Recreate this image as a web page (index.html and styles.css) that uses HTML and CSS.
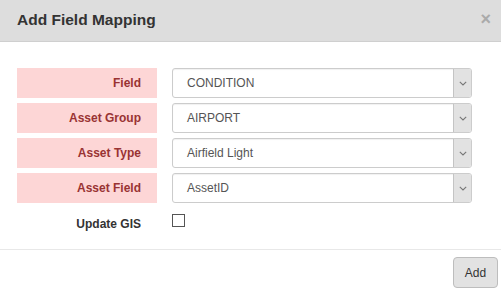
FILE: index.html
```html
<!DOCTYPE html>
<html>
<head>
<meta charset="utf-8">
<link rel="stylesheet" href="styles.css">
</head>
<body>
<div class="modal">
  <div class="modal-header">
    <h4 class="title">Add Field Mapping</h4>
    <span class="close">×</span>
  </div>
  <div class="modal-body">
    <div class="form-grid">
      <div class="label req">Field</div>
      <div class="select"><span class="value">CONDITION</span><span class="caret"><svg width="8" height="5" viewBox="0 0 8 5"><path d="M0.8 0.8 L4 4 L7.2 0.8" fill="none" stroke="#777" stroke-width="1.1"/></svg></span></div>
      <div class="label req">Asset Group</div>
      <div class="select"><span class="value">AIRPORT</span><span class="caret"><svg width="8" height="5" viewBox="0 0 8 5"><path d="M0.8 0.8 L4 4 L7.2 0.8" fill="none" stroke="#777" stroke-width="1.1"/></svg></span></div>
      <div class="label req">Asset Type</div>
      <div class="select"><span class="value">Airfield Light</span><span class="caret"><svg width="8" height="5" viewBox="0 0 8 5"><path d="M0.8 0.8 L4 4 L7.2 0.8" fill="none" stroke="#777" stroke-width="1.1"/></svg></span></div>
      <div class="label req">Asset Field</div>
      <div class="select"><span class="value">AssetID</span><span class="caret"><svg width="8" height="5" viewBox="0 0 8 5"><path d="M0.8 0.8 L4 4 L7.2 0.8" fill="none" stroke="#777" stroke-width="1.1"/></svg></span></div>
      <div class="label plain">Update GIS</div>
      <div class="check-cell"><span class="checkbox"></span></div>
    </div>
  </div>
  <div class="modal-footer">
    <button class="btn">Add</button>
  </div>
</div>
</body>
</html>
```

FILE: styles.css
```css
html, body {
  margin: 0;
  padding: 0;
  background: #fff;
  font-family: "Liberation Sans", Arial, sans-serif;
}
.modal {
  width: 501px;
  height: 293px;
  display: flex;
  flex-direction: column;
}
.modal-header {
  background: #dddddd;
  border-bottom: 1px solid #cfcfcf;
  display: flex;
  align-items: center;
  justify-content: space-between;
  padding: 0 10px 6px 17px;
  height: 35px;
}
.title {
  margin: 0;
  font-size: 15.5px;
  font-weight: bold;
  color: #333;
  padding-top: 4px;
}
.close {
  font-size: 18px;
  font-weight: bold;
  color: #aaa;
  line-height: 1;
  padding-top: 2px;
}
.modal-body {
  padding: 26px 17px 0 17px;
  height: 208px;
  box-sizing: border-box;
  border-bottom: 1px solid #e8e8e8;
}
.form-grid {
  display: grid;
  grid-template-columns: 140px 300px;
  grid-auto-rows: 30px;
  column-gap: 15px;
  row-gap: 5px;
}
.label {
  display: flex;
  align-items: center;
  justify-content: flex-end;
  padding-right: 16px;
  font-size: 12px;
  font-weight: bold;
}
.label.req {
  background: #fdd6d6;
  color: #993333;
}
.label.plain {
  color: #333;
  padding-top: 1px;
}
.select {
  display: flex;
  border: 1px solid #ccc;
  border-radius: 3px;
  box-shadow: inset 0 1px 1px rgba(0,0,0,0.06);
  background: #fff;
  overflow: hidden;
}
.value {
  flex: 1;
  display: flex;
  align-items: center;
  padding-left: 14px;
  font-size: 12px;
  color: #555;
}
.caret {
  width: 17px;
  background: #e2e2e2;
  border-left: 1px solid #c4c4c4;
  display: flex;
  align-items: center;
  justify-content: center;
}
.check-cell {
  padding-top: 6px;
}
.checkbox {
  display: block;
  width: 11px;
  height: 11px;
  border: 1px solid #555;
  background: #fff;
}
.modal-footer {
  display: flex;
  justify-content: flex-end;
  padding: 7px 3px 0 0;
}
.btn {
  width: 45px;
  height: 31px;
  background: #e2e2e2;
  border: 1px solid #bdbdbd;
  border-radius: 4px;
  font-family: "Liberation Sans", Arial, sans-serif;
  font-size: 12px;
  color: #333;
  padding: 0;
}
```
